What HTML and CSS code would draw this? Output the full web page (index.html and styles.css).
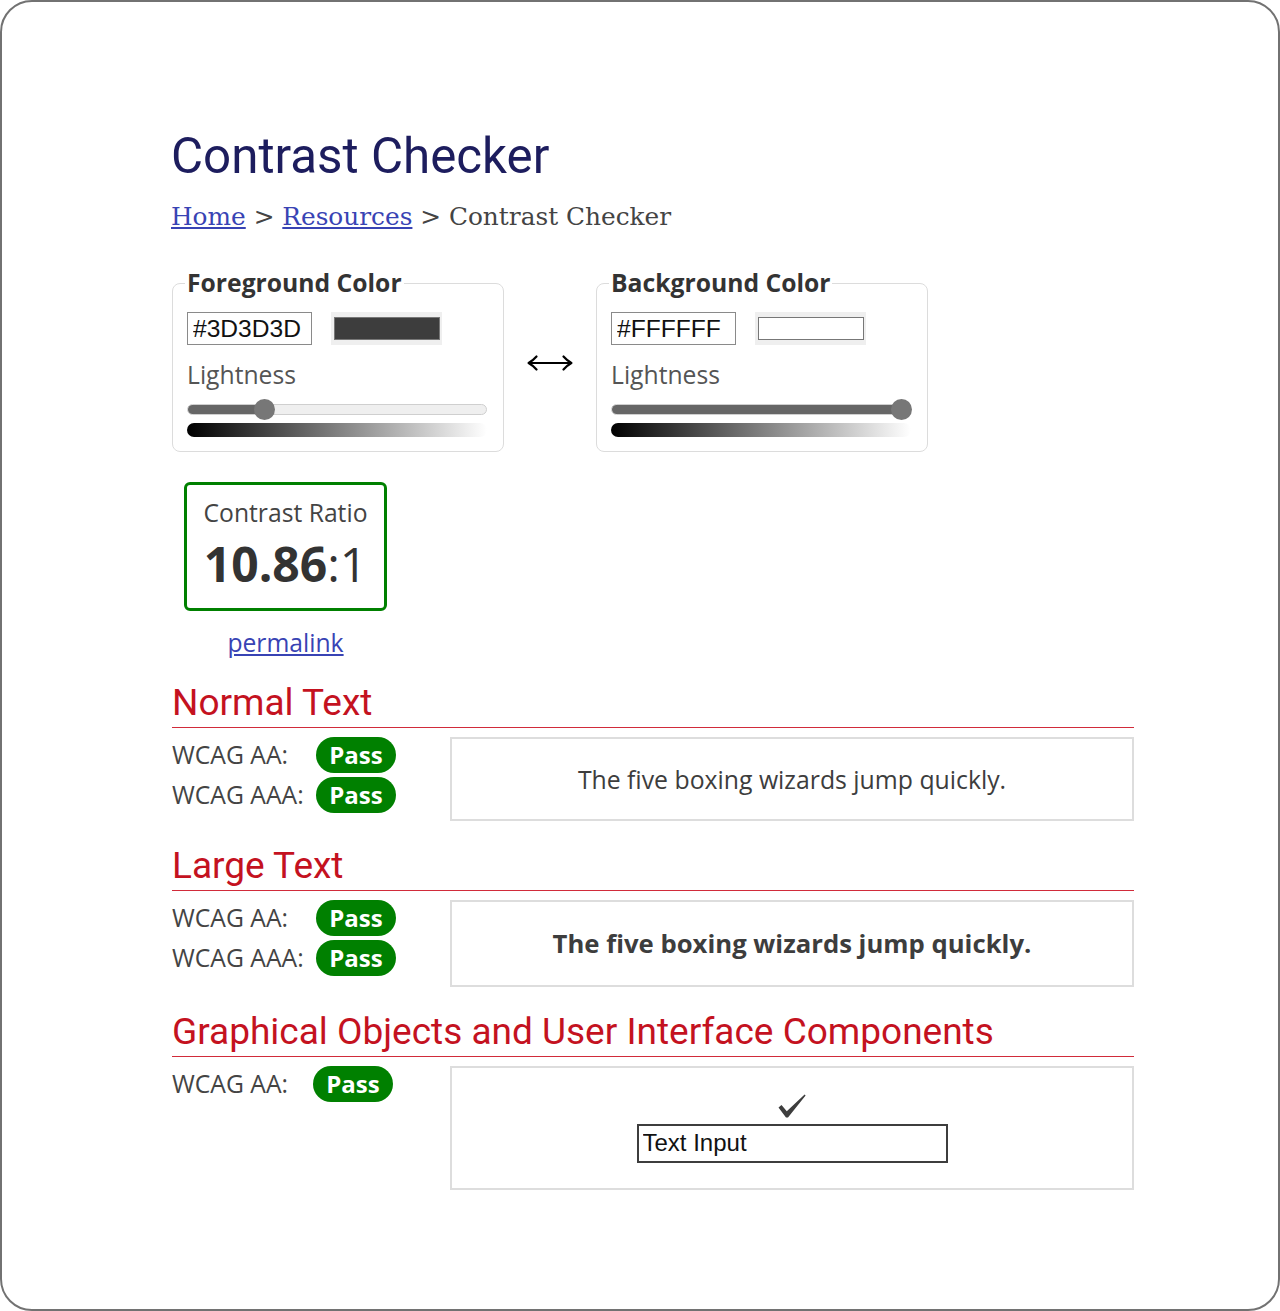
FILE: index.html
```html
<!DOCTYPE html>
<html lang="en">
<head>
<meta charset="utf-8">
<title>Contrast Checker</title>
<link rel="stylesheet" href="styles.css">
</head>
<body>
<div class="frame">
  <main class="content">
    <h1 class="page-title">Contrast Checker</h1>
    <nav class="breadcrumb">
      <a href="#">Home</a> &gt; <a href="#">Resources</a> &gt; Contrast Checker
    </nav>

    <div class="pickers">
      <fieldset class="picker">
        <legend class="picker-legend">Foreground Color</legend>
        <div class="picker-row">
          <input class="hex-input" type="text" value="#3D3D3D" aria-label="Foreground Color">
          <span class="swatch"><span class="swatch-fill swatch-dark"></span></span>
        </div>
        <div class="picker-label">Lightness</div>
        <div class="slider">
          <div class="slider-track"><div class="slider-fill" style="width:78px"></div></div>
          <div class="slider-thumb" style="left:67px"></div>
        </div>
        <div class="gradient-bar"></div>
      </fieldset>

      <div class="swap">
        <svg class="swap-icon" width="46" height="16" viewBox="0 0 46 16" aria-hidden="true">
          <path d="M2 8 H44" fill="none" stroke="#000" stroke-width="2.2"/>
          <path d="M9.5 1.5 Q6 5.5 1.6 8 Q6 10.5 9.5 14.5" fill="none" stroke="#000" stroke-width="2.2" stroke-linecap="round" stroke-linejoin="round"/>
          <path d="M36.5 1.5 Q40 5.5 44.4 8 Q40 10.5 36.5 14.5" fill="none" stroke="#000" stroke-width="2.2" stroke-linecap="round" stroke-linejoin="round"/>
        </svg>
      </div>

      <fieldset class="picker">
        <legend class="picker-legend">Background Color</legend>
        <div class="picker-row">
          <input class="hex-input" type="text" value="#FFFFFF" aria-label="Background Color">
          <span class="swatch"><span class="swatch-fill swatch-light"></span></span>
        </div>
        <div class="picker-label">Lightness</div>
        <div class="slider">
          <div class="slider-track"><div class="slider-fill" style="width:100%"></div></div>
          <div class="slider-thumb" style="left:280px"></div>
        </div>
        <div class="gradient-bar"></div>
      </fieldset>
    </div>

    <div class="ratio-block">
      <div class="ratio-box">
        <div class="ratio-label">Contrast Ratio</div>
        <div class="ratio-value"><b>10.86</b>:1</div>
      </div>
      <a class="permalink" href="#">permalink</a>
    </div>

    <section class="result">
      <h2 class="result-title">Normal Text</h2>
      <div class="result-body">
        <div class="checks">
          <span class="check-label">WCAG AA:</span><span class="badge">Pass</span>
          <span class="check-label">WCAG AAA:</span><span class="badge">Pass</span>
        </div>
        <div class="sample sample-normal">The five boxing wizards jump quickly.</div>
      </div>
    </section>

    <section class="result">
      <h2 class="result-title">Large Text</h2>
      <div class="result-body">
        <div class="checks">
          <span class="check-label">WCAG AA:</span><span class="badge">Pass</span>
          <span class="check-label">WCAG AAA:</span><span class="badge">Pass</span>
        </div>
        <div class="sample sample-large">The five boxing wizards jump quickly.</div>
      </div>
    </section>

    <section class="result">
      <h2 class="result-title">Graphical Objects and User Interface Components</h2>
      <div class="result-body">
        <div class="checks checks-single">
          <span class="check-label">WCAG AA:</span><span class="badge">Pass</span>
        </div>
        <div class="sample sample-ui">
          <svg class="check-icon" width="28" height="24" viewBox="0 0 28 24" aria-hidden="true">
            <path d="M0.5 13.5 L3.5 11 L8.8 17.2 L26.6 0.4 L27.6 1.4 L10 23.6 L8 23.6 Z" fill="#3d3d3d"/>
          </svg>
          <input class="demo-input" type="text" value="Text Input" aria-label="Text Input">
        </div>
      </div>
    </section>
  </main>
</div>
</body>
</html>
```

FILE: styles.css
```css
html, body {
  margin: 0;
  padding: 0;
  background: #fff;
}

body {
  font-family: "Open Sans", "Liberation Sans", sans-serif;
  font-size: 24.7px;
  color: #444;
}

.frame {
  box-sizing: border-box;
  width: 1280px;
  height: 1311px;
  border: 2px solid #727272;
  border-radius: 32px;
  padding: 126px 0 0 170px;
  overflow: hidden;
}

.content {
  width: 962px;
}

.page-title {
  margin: 0;
  margin-left: -1px;
  font-family: Roboto, "Liberation Sans", sans-serif;
  font-weight: 400;
  font-size: 49.3px;
  line-height: 56px;
  color: #1d1d5e;
}

.breadcrumb {
  margin-top: 19px;
  margin-left: -1px;
  font-family: "DejaVu Serif", "Liberation Serif", serif;
  font-size: 24.8px;
  line-height: 28px;
  color: #444;
}

.breadcrumb a {
  color: #3843b4;
  text-decoration: underline;
}

/* color pickers */
.pickers {
  display: flex;
  margin-top: 36px;
}

.picker {
  box-sizing: border-box;
  width: 332px;
  margin: 0;
  padding: 0 15px 14px 14px;
  border: 1px solid #dcdcdc;
  border-radius: 8px;
  min-width: 0;
}

.picker-legend {
  margin-left: -2px;
  padding: 0 2px;
  font-weight: 700;
  font-size: 24.7px;
  line-height: 32px;
  color: #333;
}

.picker-row {
  display: flex;
  align-items: center;
  margin-top: 13px;
}

.hex-input {
  box-sizing: border-box;
  width: 125px;
  height: 33px;
  margin: 0;
  padding: 0 5px;
  border: 1px solid #8a8a8a;
  border-radius: 0;
  font-family: "Liberation Sans", Arial, sans-serif;
  font-size: 24.6px;
  color: #111;
  background: #fff;
}

.swatch {
  box-sizing: border-box;
  display: block;
  width: 111px;
  height: 33px;
  margin-left: 19px;
  padding: 5px 2px 5px 3px;
  background: #efefef;
}

.swatch-fill {
  box-sizing: border-box;
  display: block;
  width: 100%;
  height: 100%;
  border: 1px solid #777;
}

.swatch-dark { background: #3d3d3d; }
.swatch-light { background: #fff; }

.picker-label {
  margin-top: 14px;
  line-height: 32px;
  color: #555;
}

.slider {
  position: relative;
  height: 21px;
  margin-top: 8px;
  width: 300px;
}

.slider-track {
  box-sizing: border-box;
  position: relative;
  top: 5px;
  height: 11px;
  border: 1px solid #cfcfcf;
  border-radius: 6px;
  background: #efefef;
  overflow: hidden;
}

.slider-fill {
  height: 100%;
  background: #666;
}

.slider-thumb {
  position: absolute;
  top: 0;
  width: 21px;
  height: 21px;
  border-radius: 50%;
  background: #777;
}

.gradient-bar {
  width: 300px;
  height: 14px;
  margin-top: 3px;
  border-radius: 7px;
  background: linear-gradient(to right, #000, #fff);
}

.swap {
  width: 92px;
  display: flex;
  justify-content: center;
  align-items: center;
  padding-top: 7px;
}

.swap-icon {
  display: block;
}

/* ratio */
.ratio-block {
  width: 203px;
  margin: 30px 0 0 12px;
  text-align: center;
}

.ratio-box {
  box-sizing: border-box;
  width: 203px;
  padding: 12px 0 12px;
  border: 3px solid #008000;
  border-radius: 6px;
}

.ratio-label {
  line-height: 32px;
  color: #444;
}

.ratio-value {
  margin-top: 3px;
  font-size: 48px;
  line-height: 64px;
  color: #333;
}

.ratio-value b {
  font-weight: 700;
}

.permalink {
  display: inline-block;
  margin-top: 16px;
  line-height: 32px;
  color: #3843b4;
  text-decoration: underline;
}

/* results */
.result {
  margin-top: 24px;
}

.ratio-block + .result {
  margin-top: 23px;
}

.result-title {
  margin: 0;
  padding-bottom: 3px;
  border-bottom: 1px solid #d12b3a;
  font-family: Roboto, "Liberation Sans", sans-serif;
  font-weight: 400;
  font-size: 37px;
  line-height: 42px;
  color: #c4121f;
}

.result-body {
  display: grid;
  grid-template-columns: 278px 1fr;
  margin-top: 9px;
}

.checks {
  display: grid;
  grid-template-columns: 144px 80px;
  grid-auto-rows: 36px;
  row-gap: 4px;
  align-items: center;
  align-content: start;
}

.checks-single {
  grid-template-columns: 141px 80px;
}

.check-label {
  line-height: 32px;
  color: #444;
}

.badge {
  display: block;
  height: 36px;
  border-radius: 18px;
  background: #008000;
  color: #fff;
  font-weight: 700;
  font-size: 24px;
  line-height: 36px;
  text-align: center;
}

.sample {
  box-sizing: border-box;
  border: 2px solid #dddddd;
  display: flex;
  align-items: center;
  justify-content: center;
  color: #3d3d3d;
}

.sample-normal {
  height: 84px;
  font-size: 24.8px;
}

.sample-large {
  height: 87px;
  font-size: 25.7px;
  font-weight: 700;
}

.sample-ui {
  height: 124px;
  flex-direction: column;
}

.check-icon {
  display: block;
  margin-bottom: 6px;
}

.demo-input {
  box-sizing: border-box;
  width: 311px;
  height: 39px;
  margin: 0;
  padding: 0 4px;
  border: 2px solid #3d3d3d;
  border-radius: 0;
  font-family: "Liberation Sans", Arial, sans-serif;
  font-size: 24px;
  color: #111;
  background: #fff;
}
```
